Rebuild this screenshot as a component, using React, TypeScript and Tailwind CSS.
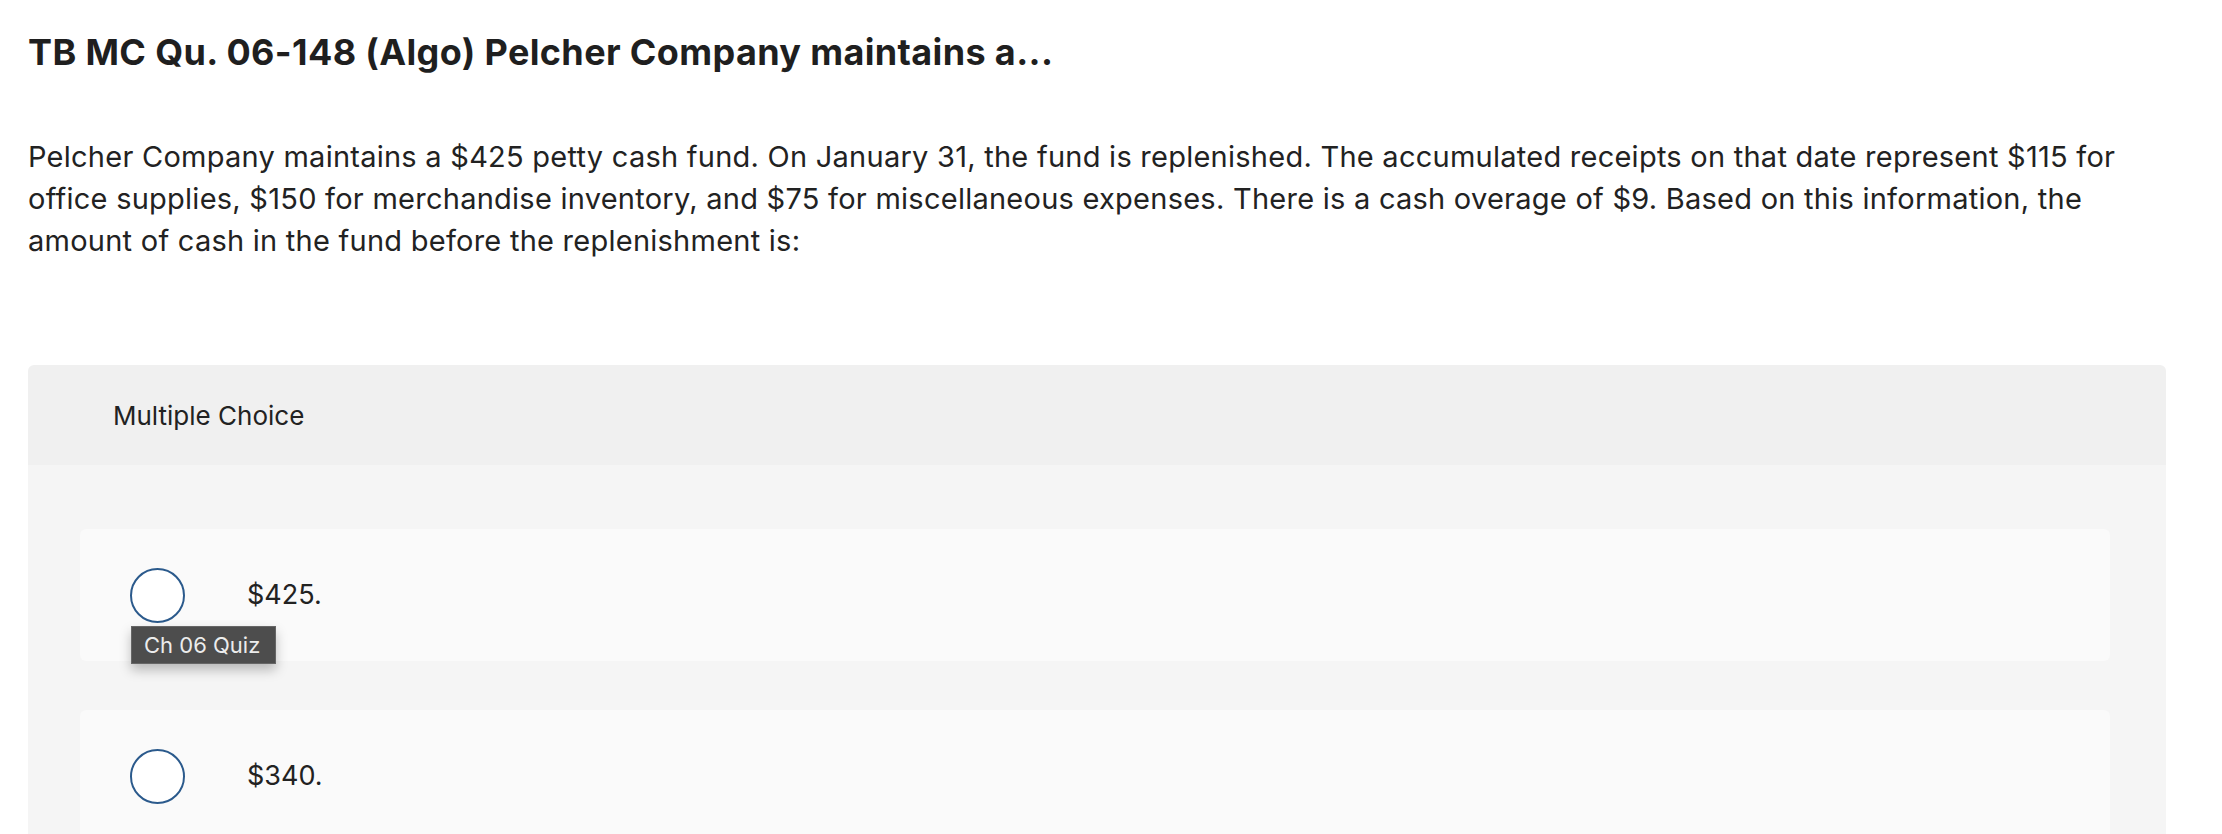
import React from "react";

const options = ["$425.", "$340."];

export default function App() {
  return (
    <div
      className="min-h-screen bg-white pl-[28px] pr-[56px] pt-[28px] text-[#1a1a1a]"
      style={{ fontFamily: "Inter, Lato, sans-serif" }}
    >
      <h1 className="text-[36px] font-bold leading-[48px] tracking-[0.01em] text-[#1f1f1f]">
        TB MC Qu. 06-148 (Algo) Pelcher Company maintains a...
      </h1>
      <p className="mt-[60px] text-[29px] leading-[42px] tracking-[0.25px] text-[#222222]">
        Pelcher Company maintains a $425 petty cash fund. On January 31, the fund is replenished. The
        accumulated receipts on that date represent $115 for office supplies, $150 for merchandise
        inventory, and $75 for miscellaneous expenses. There is a cash overage of $9. Based on this
        information, the amount of cash in the fund before the replenishment is:
      </p>
      <div className="mt-[103px] overflow-hidden rounded-md">
        <div className="flex h-[100px] items-center bg-[#f0f0f0] pl-[85px] text-[26px] text-[#222222]">
          Multiple Choice
        </div>
        <div className="flex flex-col gap-[49px] bg-[#f5f5f5] pb-[60px] pl-[52px] pr-[56px] pt-[64px]">
          {options.map((o, i) => (
            <div
              key={o}
              className="relative flex h-[132px] items-center rounded-md bg-[#fafafa] pl-[50px]"
            >
              <span className="h-[55px] w-[55px] shrink-0 rounded-full border-[2.5px] border-[#2b5a8c] bg-white" />
              <span className="ml-[62px] text-[27px] text-[#222222]">{o}</span>
              {i === 0 && (
                <div className="absolute left-[51px] top-[97px] z-10 flex h-[38px] w-[145px] items-center border border-[#666666] bg-[#4d4d4d] pl-[12px] text-[22px] text-[#ececec] shadow-[0_6px_12px_rgba(0,0,0,0.25)]">
                  Ch 06 Quiz
                </div>
              )}
            </div>
          ))}
        </div>
      </div>
    </div>
  );
}
